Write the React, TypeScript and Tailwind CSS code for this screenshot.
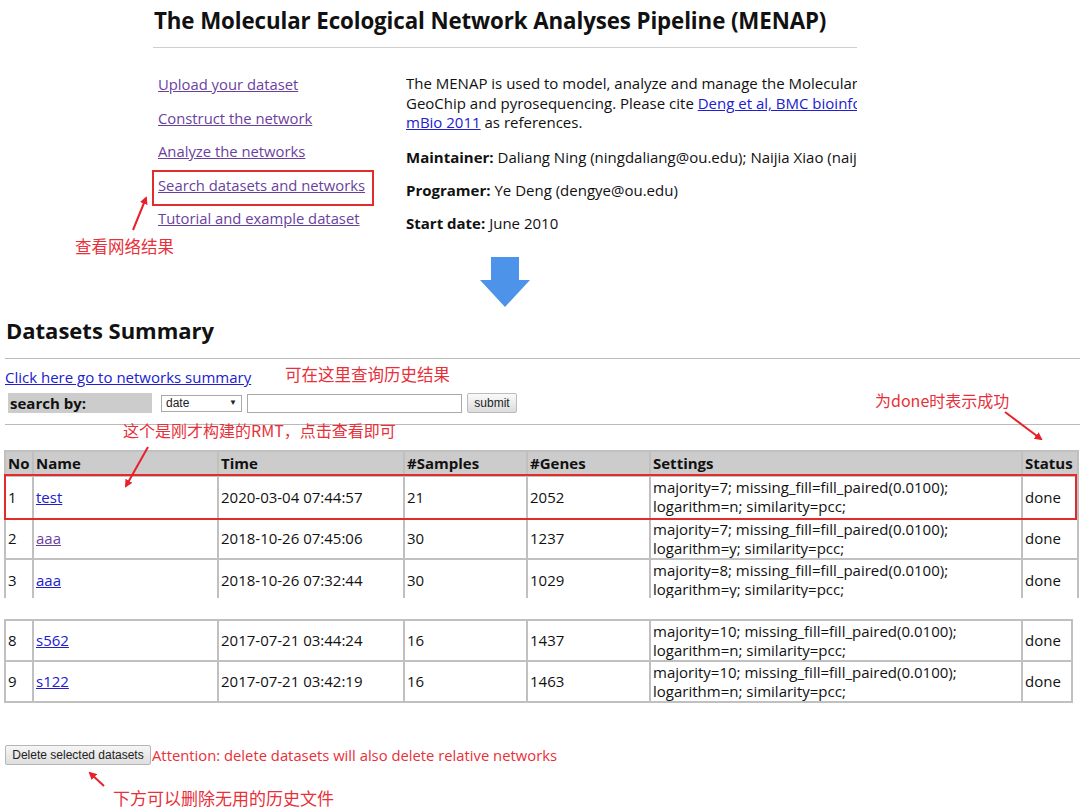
import React from "react";

const links = [
  "Upload your dataset",
  "Construct the network",
  "Analyze the networks",
  "Search datasets and networks",
  "Tutorial and example dataset",
];

type Row = {
  no: string;
  name: string;
  visited?: boolean;
  time: string;
  samples: string;
  genes: string;
  s1: string;
  s2: string;
};

const rowsTop: Row[] = [
  { no: "1", name: "test", time: "2020-03-04 07:44:57", samples: "21", genes: "2052", s1: "majority=7; missing_fill=fill_paired(0.0100);", s2: "logarithm=n; similarity=pcc;" },
  { no: "2", name: "aaa", visited: true, time: "2018-10-26 07:45:06", samples: "30", genes: "1237", s1: "majority=7; missing_fill=fill_paired(0.0100);", s2: "logarithm=y; similarity=pcc;" },
  { no: "3", name: "aaa", time: "2018-10-26 07:32:44", samples: "30", genes: "1029", s1: "majority=8; missing_fill=fill_paired(0.0100);", s2: "logarithm=y; similarity=pcc;" },
];

const rowsBottom: Row[] = [
  { no: "8", name: "s562", time: "2017-07-21 03:44:24", samples: "16", genes: "1437", s1: "majority=10; missing_fill=fill_paired(0.0100);", s2: "logarithm=n; similarity=pcc;" },
  { no: "9", name: "s122", time: "2017-07-21 03:42:19", samples: "16", genes: "1463", s1: "majority=10; missing_fill=fill_paired(0.0100);", s2: "logarithm=n; similarity=pcc;" },
];

const cell = "border-2 border-[#c0c0c0] px-[2px] align-middle";

function Cols() {
  return (
    <colgroup>
      <col className="w-[28px]" />
      <col className="w-[185px]" />
      <col className="w-[186px]" />
      <col className="w-[123px]" />
      <col className="w-[123px]" />
      <col className="w-[372px]" />
      <col />
    </colgroup>
  );
}

function DataRow({ r, h }: { r: Row; h: string }) {
  return (
    <tr className={h}>
      <td className={cell}>{r.no}</td>
      <td className={cell}>
        <a href="#" className={r.visited ? "text-[#6b3fa0] underline" : "text-[#2020d0] underline"}>
          {r.name}
        </a>
      </td>
      <td className={cell}>{r.time}</td>
      <td className={cell}>{r.samples}</td>
      <td className={cell}>{r.genes}</td>
      <td className={cell + " leading-[19px]"}>
        {r.s1}
        <br />
        {r.s2}
      </td>
      <td className={cell}>done</td>
    </tr>
  );
}

export default function App() {
  const red = "text-[#e8303a]";
  const cjk = "font-['Noto_Sans_CJK_SC',sans-serif]";
  const topHeights = ["h-[43px]", "h-[40px]", "h-[43px]"];

  return (
    <div className="relative w-[1080px] h-[809px] overflow-hidden bg-white text-[#111] text-[15px] font-['Open_Sans','Noto_Sans',sans-serif]">
      {/* HEADER */}
      <div className="ml-[153px] w-[704px] pt-[6px]">
        <h1 className="text-[22.3px] leading-[30px] font-bold pl-[1px] tracking-[-0.1px]">
          The Molecular Ecological Network Analyses Pipeline (MENAP)
        </h1>
        <div className="mt-[11px] border-t border-[#cfcfcf]" />

        <div className="flex mt-[26px]">
          {/* MENU */}
          <div className="w-[253px] pl-[5px] flex flex-col gap-[13.5px]">
            {links.map((l) => (
              <a key={l} href="#" className="leading-[20px] text-[14.8px] text-[#6b3fa0] underline">
                {l}
              </a>
            ))}
          </div>

          {/* INFO */}
          <div className="w-[451px] overflow-hidden whitespace-nowrap">
            <p className="leading-[19.5px]">
              The MENAP is used to model, analyze and manage the Molecular
              <br />
              GeoChip and pyrosequencing. Please cite{" "}
              <a href="#" className="text-[#2020d0] underline">
                Deng et al, BMC bioinfo
              </a>
              <br />
              <a href="#" className="text-[#2020d0] underline">
                mBio 2011
              </a>{" "}
              as references.
            </p>
            <p className="mt-[14px] leading-[20px]">
              <b>Maintainer:</b> Daliang Ning (ningdaliang@ou.edu); Naijia Xiao (naij
            </p>
            <p className="mt-[13px] leading-[20px]">
              <b>Programer:</b> Ye Deng (dengye@ou.edu)
            </p>
            <p className="mt-[13.5px] leading-[20px]">
              <b>Start date:</b> June 2010
            </p>
          </div>
        </div>
      </div>

      {/* BIG DOWN ARROW */}
      <div className="ml-[480px] mt-[24px] w-[50px] h-[50px]">
        <svg width="50" height="50" viewBox="0 0 50 50">
          <path d="M11 0 H39 V23 H50 L25 50 L0 23 H11 Z" fill="#4d93ea" />
        </svg>
      </div>

      {/* DATASETS SUMMARY */}
      <h2 className="mt-[8px] ml-[6px] text-[22px] leading-[30px] font-bold">Datasets Summary</h2>
      <div className="mt-[13px] ml-[5px] border-t border-[#bbb]" />

      <a href="#" className="block mt-[8px] ml-[5px] leading-[20px] text-[#2020d0] underline w-fit">
        Click here go to networks summary
      </a>

      <div className="mt-[6px] flex items-center h-[20px] font-['Liberation_Sans',sans-serif] text-[12px]">
        <div className="ml-[8px] w-[144px] h-[20px] bg-[#cccccc] pl-[2px] font-bold text-[15px] leading-[20px] font-['Open_Sans',sans-serif]">
          search by:
        </div>
        <div className="ml-[9px] w-[81px] h-[17px] border border-[#a9a9a9] flex items-center justify-between px-[4px] text-[#222]">
          <span>date</span>
          <span className="text-[8px]">▼</span>
        </div>
        <div className="ml-[5px] w-[215px] h-[19px] border border-[#a9a9a9]" />
        <button className="ml-[5px] w-[50px] h-[20px] border border-[#bbb] rounded-[2px] bg-gradient-to-b from-[#fafafa] to-[#dcdcdc] text-[#222]">
          submit
        </button>
      </div>

      <div className="mt-[11px] ml-[5px] border-t border-[#bbb]" />

      {/* TABLE TOP */}
      <div className="mt-[25px] ml-[4px] h-[148px] overflow-hidden">
        <table className="table-fixed border-collapse w-[1075px]">
          <Cols />
          <thead>
            <tr className="h-[23px] bg-[#cccccc] font-bold text-left">
              <th className={cell}>No</th>
              <th className={cell}>Name</th>
              <th className={cell}>Time</th>
              <th className={cell}>#Samples</th>
              <th className={cell}>#Genes</th>
              <th className={cell}>Settings</th>
              <th className={cell}>Status</th>
            </tr>
          </thead>
          <tbody>
            {rowsTop.map((r, i) => (
              <DataRow key={r.no} r={r} h={topHeights[i]} />
            ))}
          </tbody>
        </table>
      </div>

      {/* TABLE BOTTOM */}
      <div className="mt-[21px] ml-[4px]">
        <table className="table-fixed border-collapse w-[1069px]">
          <Cols />
          <tbody>
            {rowsBottom.map((r) => (
              <DataRow key={r.no} r={r} h="h-[41px]" />
            ))}
          </tbody>
        </table>
      </div>

      {/* DELETE */}
      <div className="mt-[41px] ml-[5px] flex items-center">
        <button className="w-[146px] h-[20px] border border-[#b5b5b5] rounded-[2px] bg-gradient-to-b from-[#f6f6f6] to-[#dedede] text-[12px] text-[#222] font-['Liberation_Sans',sans-serif]">
          Delete selected datasets
        </button>
        <span className={"ml-[1px] text-[14.8px] " + red}>
          Attention: delete datasets will also delete relative networks
        </span>
      </div>

      {/* ANNOTATIONS */}
      <div className="absolute left-[152px] top-[170px] w-[222px] h-[36px] border-2 border-[#e22b2b]" />
      <div className="absolute left-[4px] top-[474px] w-[1073px] h-[46px] border-2 border-[#e22b2b]" />

      <div className={"absolute left-[75px] top-[234px] text-[16.5px] leading-[24px] " + red + " " + cjk}>查看网络结果</div>
      <div className={"absolute left-[285px] top-[362px] text-[16.5px] leading-[24px] " + red + " " + cjk}>可在这里查询历史结果</div>
      <div className={"absolute left-[875px] top-[388px] text-[16px] leading-[24px] " + red + " " + cjk}>为done时表示成功</div>
      <div className={"absolute left-[123px] top-[418px] text-[16px] leading-[24px] " + red + " " + cjk}>这个是刚才构建的RMT，点击查看即可</div>
      <div className={"absolute left-[113px] top-[786px] text-[17px] leading-[24px] " + red + " " + cjk}>下方可以删除无用的历史文件</div>

      <svg className="absolute inset-0 pointer-events-none" width="1080" height="809">
        <defs>
          <marker id="ah" markerWidth="8" markerHeight="8" refX="6" refY="4" orient="auto" markerUnits="userSpaceOnUse">
            <path d="M0 0 L8 4 L0 8 Z" fill="#e8202a" />
          </marker>
        </defs>
        <g stroke="#e8202a" strokeWidth="2" fill="none" markerEnd="url(#ah)">
          <line x1="133" y1="230" x2="146" y2="198" />
          <line x1="1005" y1="412" x2="1041" y2="439" />
          <line x1="148" y1="447" x2="126" y2="486" />
          <line x1="104" y1="786" x2="90" y2="773" />
        </g>
      </svg>
    </div>
  );
}
